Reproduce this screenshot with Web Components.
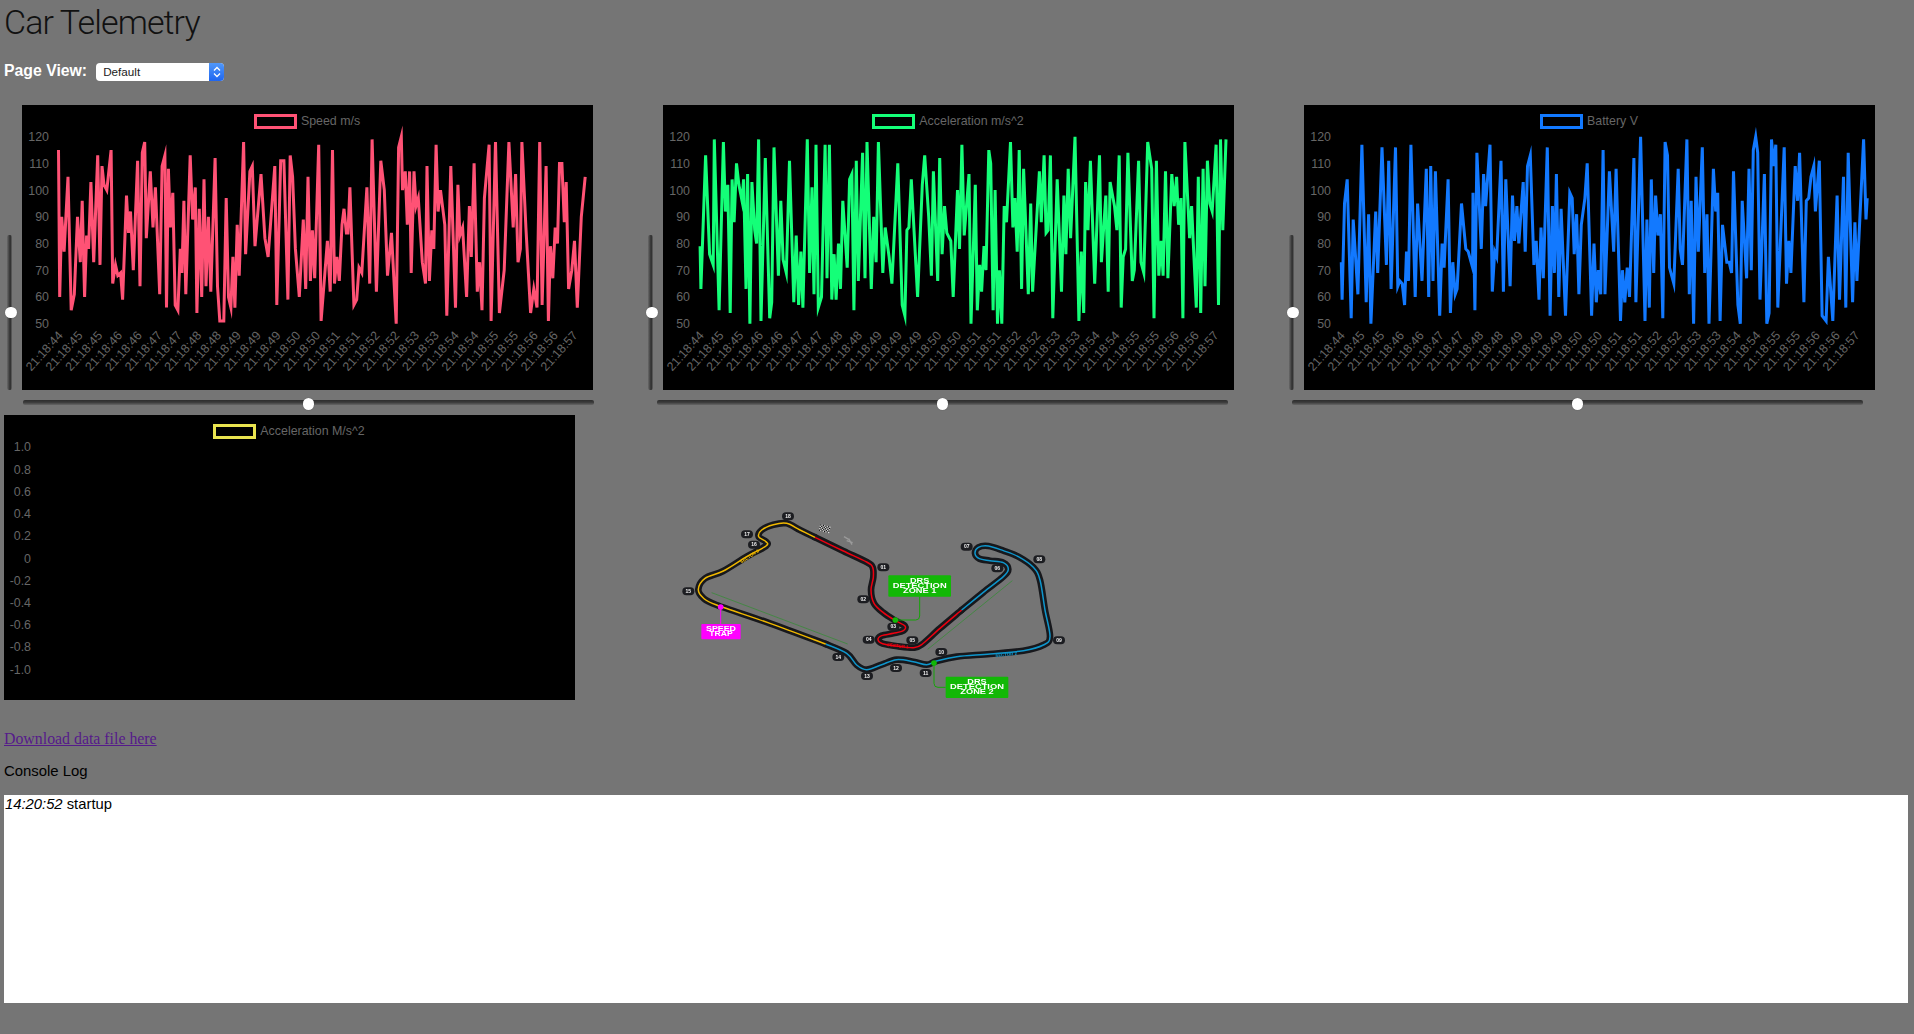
<!DOCTYPE html>
<html lang="en">
<head>
<meta charset="utf-8">
<title>Car Telemetry</title>
<style>
  html, body { margin: 0; background: #757575; }
  body { font-family: "Liberation Sans", Arial, sans-serif; min-height: 1034px; overflow: hidden; }
</style>
</head>
<body>
<telemetry-app></telemetry-app>

<script>
const SPEED = '148:115 151:60 156:90 162:77 172:105 180:55 188:61 196:90 203:73 208:96 214:60 219:83 224:78 230:103 237:73 247:113 253:72 258:109 263:102 270:100 281:115 285:65 292:72 298:68 305:69 310:59 320:98 325:84 330:92 337:70 348:111 354:64 360:114 366:118 370:82 380:107 387:86 393:101 404:61 410:109 417:113 421:56 426:108 431:86 437:99 443:57 450:55 456:78 460:69 465:96 470:61 481:113 487:89 494:101 498:54 504:93 510:60 516:104 521:64 527:90 533:62 544:112 550:64 556:51 566:51 572:97 578:60 584:56 589:75 594:56 600:87 605:68 616:118 621:76 632:107 638:109 645:79 660:106 670:82 678:75 695:109 700:57 710:111 718:111 728:59 734:113 740:105 747:78 757:60 767:89 773:63 779:105 785:66 790:85 796:67 806:117 812:51 828:81 835:62 841:115 846:65 852:75 858:66 865:87 870:93 876:84 880:84 885:101 895:57 902:59 908:71 915:69 928:101 935:65 941:119 952:62 963:111 972:100 980:68 990:84 1002:50 1008:116 1015:120 1018:100 1025:107 1030:87 1036:107 1040:69 1047:107 1052:94 1058:97 1068:73 1076:65 1080:109 1086:66 1092:85 1097:78 1103:117 1108:92 1114:100 1125:87 1130:53 1140:109 1152:56 1158:102 1163:83 1170:86 1180:60 1187:94 1192:75 1199:110 1207:62 1213:73 1219:55 1225:97 1237:117 1242:51 1253:118 1263:54 1275:70 1287:118 1298:86 1304:106 1310:73 1316:78 1320:118 1330:86 1342:54 1350:63 1358:56 1365:118 1371:57 1381:109 1387:51 1392:79 1398:67 1404:86 1410:80 1415:110 1421:110 1427:88 1432:103 1438:63 1446:70 1453:81 1460:56 1470:90 1480:105';
const ACCEL = '152:79 154:63 166:113 176:76 185:72 188:119 200:55 211:118 216:92 222:102 228:54 233:104 238:88 244:110 250:102 258:96 262:104 268:63 272:106 278:50 283:103 290:85 295:80 300:119 306:51 317:112 328:52 333:58 339:116 350:68 356:96 362:74 370:69 378:111 389:58 395:83 401:57 407:77 412:56 423:119 429:69 435:101 440:61 445:117 451:56 459:60 468:117 473:67 479:117 485:59 491:76 496:59 502:80 507:63 513:96 524:71 530:104 536:106 541:55 547:111 552:66 563:114 569:67 574:118 585:63 591:90 597:73 603:118 614:69 620:86 630:75 637:65 652:110 663:57 670:53 675:85 680:86 686:104 702:60 714:102 720:113 730:90 737:68 742:107 753:66 758:112 764:76 770:94 776:84 786:81 792:60 803:100 808:78 814:117 820:83 832:106 837:50 848:102 853:55 859:72 864:62 870:79 875:70 882:115 887:110 893:55 898:100 904:50 909:70 915:50 921:94 927:88 937:118 943:86 948:97 954:77 959:115 965:63 970:108 982:61 988:95 993:62 1010:107 1015:88 1022:113 1027:84 1032:85 1038:113 1044:52 1055:104 1066:62 1072:98 1077:76 1083:108 1089:82 1100:120 1110:51 1116:77 1122:54 1127:103 1133:85 1139:111 1150:65 1162:113 1167:73 1178:98 1184:62 1189:103 1200:94 1206:85 1212:113 1217:56 1222:75 1228:78 1234:114 1245:66 1250:70 1261:111 1267:73 1274:69 1284:118 1294:108 1300:52 1306:111 1312:68 1318:81 1323:68 1329:107 1335:67 1345:106 1351:94 1357:105 1362:87 1368:97 1373:52 1378:118 1390:82 1395:94 1407:56 1412:105 1418:54 1424:108 1429:64 1435:111 1441:95 1447:92 1457:117 1463:57 1468:119 1474:85 1482:119';
const BATTERY = '155:73 157:59 163:95 170:104 180:52 185:89 197:61 207:117 218:58 224:91 230:50 242:92 247:69 258:116 269:72 275:111 281:63 292:116 298:64 303:66 309:65 315:57 320:77 325:66 331:117 342:60 348:95 359:66 370:108 376:60 381:109 387:66 393:107 404:53 410:80 415:71 425:104 431:54 437:73 443:61 448:63 459:95 470:78 476:77 487:71 488:99 493:55 498:114 509:78 515:106 520:94 531:117 537:62 543:77 548:75 559:111 565:62 571:104 582:64 588:98 593:81 599:94 604:80 615:103 620:77 626:109 633:113 642:72 648:81 655:59 660:86 666:67 676:116 683:53 689:94 694:69 699:106 705:60 711:93 722:53 733:99 739:97 744:76 750:91 756:61 762:87 771:97 777:110 788:53 794:80 800:58 805:70 811:61 817:115 822:61 833:107 844:77 850:108 861:51 866:70 872:58 878:71 884:60 895:112 900:58 912:120 923:51 928:89 934:56 939:104 945:69 950:98 956:83 962:91 968:52 974:118 980:113 985:71 996:65 1007:108 1012:78 1018:72 1029:119 1035:61 1040:96 1046:50 1052:105 1058:77 1068:116 1074:69 1080:91 1085:50 1096:108 1102:92 1107:99 1113:51 1119:87 1130:73 1136:73 1142:69 1147:107 1158:57 1164:50 1169:96 1180:67 1186:108 1192:70 1197:115 1203:120 1208:114 1214:59 1225:106 1231:50 1237:54 1243:119 1248:109 1254:117 1259:56 1275:116 1281:65 1287:81 1292:69 1303:109 1309:96 1314:114 1325:58 1331:96 1337:97 1343:105 1350:109 1354:92 1364:111 1371:53 1381:51 1387:75 1398:51 1409:98 1415:59 1425:105 1431:56 1437:114 1448:58 1454:88 1459:66 1476:119 1482:89 1485:97';

const TIMES = '44 45 45 46 46 47 47 48 48 49 49 49 50 50 51 51 52 52 53 53 54 54 55 55 56 56 57'.split(' ');

class LineChart extends HTMLElement {
  constructor() {
    super();
    this.attachShadow({ mode: 'open' });
  }

  connectedCallback() {
    const label = this.getAttribute('label');
    const color = this.getAttribute('color');
    const shift = parseFloat(this.getAttribute('shift')) || 0;
    const data = this.data || '';

    let ticks, xLabels = '', line = '';
    if (data) {
      const yOf = v => 31.7 + (120 - v) * 2.671;
      ticks = [120, 110, 100, 90, 80, 70, 60, 50].map(v => [v, yOf(v)]);
      xLabels = TIMES.map((s, i) => {
        const x = 41.5 + i * 19.8;
        return `<text transform="translate(${x} 231) rotate(-48)" text-anchor="end">21:18:${s}</text>`;
      }).join('');
      const pts = data.split(' ').map(p => {
        const [x, v] = p.split(':');
        return `${(x / 2.529 - shift).toFixed(1)},${yOf(+v).toFixed(1)}`;
      }).join(' ');
      line = `<polyline points="${pts}" fill="none" stroke="${color}" stroke-width="3" stroke-miterlimit="8"/>`;
    } else {
      ticks = ['1.0', '0.8', '0.6', '0.4', '0.2', '0', '-0.2', '-0.4', '-0.6', '-0.8', '-1.0']
        .map((v, i) => [v, 32 + i * 22.23]);
    }
    const yLabels = ticks.map(([v, y]) =>
      `<text x="27" y="${y + 4.4}" text-anchor="end">${v}</text>`).join('');

    this.shadowRoot.innerHTML = `
      <style>
        :host { display: block; position: relative; width: 571px; height: 285px; background: #000; }
        svg { display: block; }
        text { font: 12.4px "Liberation Sans", Arial, sans-serif; fill: #666; }
        .legend {
          position: absolute; top: 8.5px; left: 0; right: 1px;
          display: flex; justify-content: center; align-items: center; gap: 4px;
          color: #666; font-size: 12.4px; line-height: 15px;
        }
        .box { width: 43px; height: 15px; box-sizing: border-box; border: 3px solid ${color}; }
      </style>
      <svg width="571" height="285" viewBox="0 0 571 285">
        ${yLabels}
        ${xLabels}
        ${line}
      </svg>
      <div class="legend"><span class="box"></span><span>${label}</span></div>
    `;
  }
}

class RangeSlider extends HTMLElement {
  constructor() {
    super();
    this.attachShadow({ mode: 'open' });
  }

  connectedCallback() {
    const vertical = this.hasAttribute('vertical');
    this.shadowRoot.innerHTML = `
      <style>
        :host { display: block; position: relative; box-sizing: border-box; }
        :host([vertical]) { width: 5px; height: 155px; }
        :host(:not([vertical])) { width: 571px; height: 5px; }
        .track { width: 100%; height: 100%; border-radius: 2px; }
        .h { background: linear-gradient(#2d2d2d, #3a3a3a 45%, #666); }
        .v { background: linear-gradient(90deg, #6a6a6a, #3a3a3a 50%, #333 70%, #666); }
        .thumb {
          position: absolute; width: 11.5px; height: 11.5px; border-radius: 50%; background: #fff;
          box-shadow: 0 0 1px #444;
        }
        .h + .thumb { left: 50%; top: -2px; margin-left: -5.75px; }
        .v + .thumb { top: 50%; left: -2px; margin-top: -5.75px; }
      </style>
      <div class="track ${vertical ? 'v' : 'h'}"></div>
      <div class="thumb"></div>
    `;
  }
}

class ChartPanel extends HTMLElement {
  constructor() {
    super();
    this.attachShadow({ mode: 'open' });
  }

  connectedCallback() {
    const offset = this.getAttribute('slider-offset') || 12;
    this.shadowRoot.innerHTML = `
      <style>
        :host { display: block; }
        .top { display: flex; align-items: flex-end; }
        .side { width: 18px; display: flex; padding-left: 3px; box-sizing: border-box; }
        .bottom { margin: 10px 0 0 ${offset}px; }
      </style>
      <div class="top">
        <div class="side"><range-slider vertical></range-slider></div>
        <slot></slot>
      </div>
      <range-slider class="bottom"></range-slider>
    `;
  }
}

// Catmull-Rom through the hand placed points, so the circuit stays round
function smooth(p) {
  let d = `M${p[0][0]} ${p[0][1]}`;
  for (let i = 0; i < p.length - 1; i++) {
    const a = p[i - 1] || p[i], b = p[i], c = p[i + 1], e = p[i + 2] || c;
    const c1 = [b[0] + (c[0] - a[0]) / 6, b[1] + (c[1] - a[1]) / 6];
    const c2 = [c[0] - (e[0] - b[0]) / 6, c[1] - (e[1] - b[1]) / 6];
    d += `C${c1[0].toFixed(1)} ${c1[1].toFixed(1)} ${c2[0].toFixed(1)} ${c2[1].toFixed(1)} ${c[0]} ${c[1]}`;
  }
  return d;
}

const RED_SECTOR = [[465,142],[550,183],[620,216],[638,232],[640,262],[633,300],[642,340],[670,368],[706,392],[735,408],[730,422],[700,430],[665,437],[654,449],[668,461],[715,469],[760,473],[785,464],[840,415],[905,360]];
const BLUE_SECTOR = [[905,360],[970,307],[1030,260],[1045,238],[1030,218],[990,212],[958,206],[945,190],[955,172],[985,168],[1030,182],[1075,200],[1120,232],[1140,270],[1155,360],[1170,440],[1150,465],[1090,482],[990,492],[890,500],[830,513],[800,524],[760,515],[710,509],[665,524],[620,539],[590,525],[560,490],[497,462]];
const YELLOW_SECTOR = [[497,462],[330,400],[170,345],[130,324],[115,298],[135,265],[190,243],[260,200],[318,168],[318,155],[296,140],[305,120],[340,104],[380,100],[420,120],[465,142]];
const TURNS = [['01',670,232],['02',610,328],['03',700,410],['04',626,449],['05',757,451],['06',1012,235],['07',920,170],['08',1138,208],['09',1197,451],['10',844,486],['11',797,549],['12',708,534],['13',621,558],['14',535,501],['15',85,304],['16',282,164],['17',261,133],['18',384,79]];

class TrackMap extends HTMLElement {
  constructor() {
    super();
    this.attachShadow({ mode: 'open' });
  }

  connectedCallback() {
    const sectors = [[RED_SECTOR, '#ee0010'], [BLUE_SECTOR, '#0f96cc'], [YELLOW_SECTOR, '#f0b800']];
    const under = sectors.map(([p]) => `<path d="${smooth(p)}" stroke="#17181c" stroke-width="20" stroke-linecap="round"/>`).join('');
    const over = sectors.map(([p, c]) => `<path d="${smooth(p)}" stroke="${c}" stroke-width="4.5"/>`).join('');
    const turns = TURNS.map(([n, x, y]) => `
      <rect x="${x - 18}" y="${y - 12}" width="36" height="24" rx="12" fill="#1c1d21"/>
      <text x="${x}" y="${y + 5}" class="turn">${n}</text>`).join('');
    let flag = `<rect x="478" y="106" width="32" height="20" fill="#ddd" transform="rotate(14 494 116)"/>`;
    for (let r = 0; r < 5; r++) {
      for (let c = 0; c < 8; c++) {
        if ((r + c) % 2 === 0) flag += `<rect x="${478 + c * 4}" y="${106 + r * 4}" width="4" height="4" fill="#111" transform="rotate(14 494 116)"/>`;
      }
    }

    const box = (x, y, w, h, fill, lines, ys, widths) => `
      <rect x="${x}" y="${y}" width="${w}" height="${h}" rx="3" fill="${fill}"/>
      ${lines.map((l, i) => `<text x="${x + w / 2}" y="${ys[i]}" class="box" textLength="${widths[i]}" lengthAdjust="spacingAndGlyphs">${l}</text>`).join('')}`;

    this.shadowRoot.innerHTML = `
      <style>
        :host { display: block; width: 420px; height: 220px; }
        svg { display: block; filter: blur(.35px); }
        path { fill: none; }
        text { font-family: "Liberation Sans", Arial, sans-serif; font-weight: 700; text-anchor: middle; }
        .turn { font-size: 15px; fill: #f2f2f2; }
        .box { font-size: 19px; fill: #fff; }
        .sector { font-size: 13px; }
      </style>
      <svg width="420" height="220" viewBox="0 0 1260 660">
        <path d="M155 308L563 462M803 478L1057 272" stroke="#3c8a3c" stroke-width="2.5"/>
        ${under}
        ${over}
        ${turns}
        <text class="sector" fill="#ee0010" transform="translate(713 472) rotate(7)">SECTOR 1</text>
        <text class="sector" fill="#0f96cc" transform="translate(1039 498) rotate(-6)">SECTOR 2</text>
        <text class="sector" fill="#f0b800" transform="translate(271 203) rotate(-33)">SECTOR 3</text>
        ${flag}
        <path d="M552 140l14 8M560 152l18 6M566 146l10 18" stroke="#9a9a9a" stroke-width="4"/>
        <path d="M779 320V378Q779 390 767 390H706" stroke="#17a30a" stroke-width="3"/>
        <path d="M822 519V580Q822 592 834 592H857" stroke="#17a30a" stroke-width="3"/>
        <path d="M182 351V402" stroke="#f0f" stroke-width="3"/>
        <circle cx="706" cy="390" r="8.5" fill="#12b806"/>
        <circle cx="822" cy="519" r="8.5" fill="#12b806"/>
        <circle cx="182" cy="351" r="8.5" fill="#f0f"/>
        ${box(685, 256, 188, 64, '#12b806', ['DRS', 'DETECTION', 'ZONE 1'], [279, 294, 309], [58, 162, 100])}
        ${box(857, 560, 188, 64, '#12b806', ['DRS', 'DETECTION', 'ZONE 2'], [583, 598, 613], [58, 162, 100])}
        ${box(124, 402, 118, 46, '#f0f', ['SPEED', 'TRAP'], [424, 439], [90, 70])}
      </svg>
    `;
  }
}

class ViewSelect extends HTMLElement {
  constructor() {
    super();
    this.attachShadow({ mode: 'open' });
  }

  connectedCallback() {
    this.shadowRoot.innerHTML = `
      <style>
        :host { display: flex; align-items: center; gap: 9px; padding-left: 4px; height: 18px; }
        label { font-size: 15.8px; font-weight: 700; color: #fff; position: relative; top: -1px; }
        .wrap { position: relative; width: 128px; height: 18px; }
        select {
          appearance: none; -webkit-appearance: none; display: block; width: 100%; height: 100%;
          border: 0; border-radius: 4px; background: #fff; margin: 0; padding: 0 18px 1px 7px;
          font: 11.7px "Liberation Sans", Arial, sans-serif; color: #222;
        }
        .arrows {
          position: absolute; right: 0; top: 0; bottom: 0; width: 15px; border-radius: 0 4px 4px 0;
          background: linear-gradient(#5098fa, #1f66f0); display: flex; align-items: center; justify-content: center;
        }
      </style>
      <label for="view">${this.getAttribute('label')}</label>
      <div class="wrap">
        <select id="view"><option>Default</option></select>
        <div class="arrows">
          <svg width="8" height="12" viewBox="0 0 8 12"><path d="M1 4.5L4 1.5L7 4.5M1 7.5L4 10.5L7 7.5" fill="none" stroke="#fff" stroke-width="1.3"/></svg>
        </div>
      </div>
    `;
  }
}

class ConsoleLog extends HTMLElement {
  constructor() {
    super();
    this.attachShadow({ mode: 'open' });
  }

  connectedCallback() {
    this.shadowRoot.innerHTML = `
      <style>
        :host { display: block; margin: 0 6px 0 4px; }
        h2 { margin: 0 0 15px; font-size: 14.9px; font-weight: 400; color: #000; line-height: 17px; }
        .log {
          background: #fff; height: 208px; box-sizing: border-box; padding: 1px 1px;
          color: #000; font-size: 14.8px; line-height: 17px;
        }
      </style>
      <h2>Console Log</h2>
      <div class="log"><slot></slot></div>
    `;
  }
}

class TelemetryApp extends HTMLElement {
  constructor() {
    super();
    this.attachShadow({ mode: 'open' });
  }

  connectedCallback() {
    this.shadowRoot.innerHTML = `
      <style>
        :host { display: block; }
        h1 {
          margin: 0; padding: 2px 0 0 4px; font: 300 34px/40px Roboto, "Liberation Sans", sans-serif;
          letter-spacing: -.9px; color: #111;
        }
        view-select { margin-top: 21px; }
        .row1 { display: grid; grid-template-columns: repeat(3, 641px); padding-left: 4px; margin-top: 24px; height: 310px; }
        .row2 { display: grid; grid-template-columns: 641px 641px; padding-left: 4px; height: 285px; }
        track-map { margin: 75px 0 0 15px; }
        a {
          display: block; margin: 29px 0 0 4px; width: fit-content; color: #551a8b;
          font: 15.85px/19px "Liberation Serif", "Times New Roman", serif;
        }
        console-log { margin-top: 15px; }
      </style>
      <h1>Car Telemetry</h1>
      <view-select label="Page View:"></view-select>
      <div class="row1">
        <chart-panel slider-offset="19"><line-chart id="speed" label="Speed m/s" color="#ff5275" shift="22"></line-chart></chart-panel>
        <chart-panel slider-offset="12"><line-chart id="accel" label="Acceleration m/s^2" color="#14ff78" shift="23"></line-chart></chart-panel>
        <chart-panel slider-offset="6"><line-chart id="battery" label="Battery V" color="#1279ff" shift="24"></line-chart></chart-panel>
      </div>
      <div class="row2">
        <line-chart label="Acceleration M/s^2" color="#e9e44f"></line-chart>
        <track-map></track-map>
      </div>
      <a href="#data">Download data file here</a>
      <console-log><i>14:20:52</i> startup</console-log>
    `;
  }
}

// charts read this.data on connect, so they are tagged before line-chart is defined
customElements.define('telemetry-app', TelemetryApp);
const root = document.querySelector('telemetry-app').shadowRoot;
root.getElementById('speed').data = SPEED;
root.getElementById('accel').data = ACCEL;
root.getElementById('battery').data = BATTERY;
customElements.define('range-slider', RangeSlider);
customElements.define('chart-panel', ChartPanel);
customElements.define('line-chart', LineChart);
customElements.define('track-map', TrackMap);
customElements.define('view-select', ViewSelect);
customElements.define('console-log', ConsoleLog);
</script>
</body>
</html>
